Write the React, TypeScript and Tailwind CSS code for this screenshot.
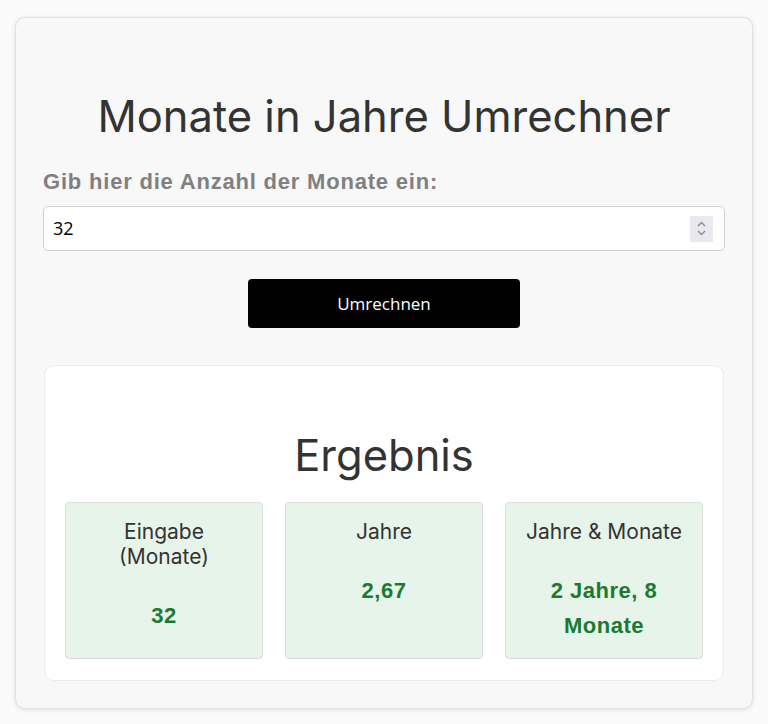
import React, { useState } from 'react';

const inter = { fontFamily: 'Inter, "Noto Sans", sans-serif' };

function ResultBox({ label, value }: { label: React.ReactNode; value: React.ReactNode }) {
  return (
    <div className="bg-[#e6f4ea] border border-[#dcdcdc] rounded-[4px] px-3 pt-[16px] pb-[15px] text-center">
      <div className="text-[21px] leading-[25px] text-[#333]" style={inter}>
        {label}
      </div>
      <div className="mt-[29px] text-[22px] leading-[35px] tracking-[0.5px] font-bold text-[#1b7a31] font-['Liberation_Sans',Arial,sans-serif]">
        {value}
      </div>
    </div>
  );
}

export default function App() {
  const [months, setMonths] = useState('32');
  const m = parseInt(months, 10) || 0;
  const years = (m / 12).toFixed(2).replace('.', ',');
  const y = Math.floor(m / 12);
  const rest = m % 12;

  return (
    <div className="min-h-[724px] bg-[#fafafa] pt-[17px] pb-[16px] px-[15px]">
      <div className="bg-[#f8f8f8] border border-[#e2e2e2] rounded-[10px] shadow-[0_1px_4px_rgba(0,0,0,0.12)] px-[27px] pt-[72px] pb-[27px]">
        <h1 className="text-center text-[43.5px] leading-[53px] font-normal text-[#333]" style={inter}>
          Monate in Jahre Umrechner
        </h1>

        <label className="block mt-[26px] text-[22px] leading-[25px] tracking-[0.8px] font-bold text-[#808080] font-['Liberation_Sans',Arial,sans-serif]">
          Gib hier die Anzahl der Monate ein:
        </label>

        <div className="mt-[12px] h-[45px] bg-white border border-[#cfcfcf] rounded-[5px] flex items-center pl-[9px] pr-[11px]">
          <input
            value={months}
            onChange={(e) => setMonths(e.target.value)}
            className="flex-1 outline-none bg-transparent text-[18px] text-black font-['Open_Sans',sans-serif]"
          />
          <div className="w-[23px] h-[26px] bg-[#e9e9ef] flex flex-col items-center justify-center gap-[3px]">
            <svg width="9" height="6" viewBox="0 0 9 6" fill="none" stroke="#8a8a8a" strokeWidth="1.3">
              <path d="M1 5l3.5-3.5L8 5" />
            </svg>
            <svg width="9" height="6" viewBox="0 0 9 6" fill="none" stroke="#8a8a8a" strokeWidth="1.3">
              <path d="M1 1l3.5 3.5L8 1" />
            </svg>
          </div>
        </div>

        <div className="flex justify-center mt-[28px]">
          <button className="w-[272px] h-[49px] bg-black text-white rounded-[4px] text-[17px] font-['Open_Sans',sans-serif]">
            Umrechnen
          </button>
        </div>

        <div className="mt-[37px] mx-[1px] bg-white border border-[#ececec] rounded-[10px] px-[20px] pt-[63px] pb-[21px]">
          <h2 className="text-center text-[43.5px] leading-[53px] font-normal text-[#333]" style={inter}>
            Ergebnis
          </h2>
          <div className="mt-[20px] grid grid-cols-3 gap-[22px]">
            <ResultBox label={<>Eingabe<br />(Monate)</>} value={m} />
            <ResultBox label="Jahre" value={years} />
            <ResultBox label="Jahre & Monate" value={`${y} Jahre, ${rest} Monate`} />
          </div>
        </div>
      </div>
    </div>
  );
}
